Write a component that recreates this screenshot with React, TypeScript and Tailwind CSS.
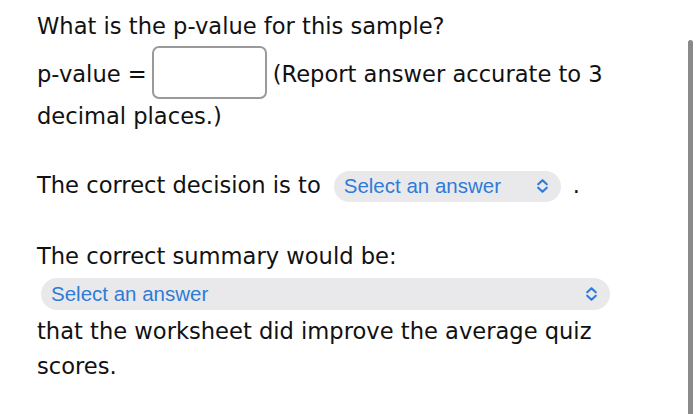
import React from 'react'

const Chevrons = (): React.ReactElement => (
  <svg width="13" height="16" viewBox="0 0 13 16" fill="none" className="shrink-0">
    <path d="M2.2 6.3 L6.5 2.2 L10.8 6.3" stroke="#2f7bd8" strokeWidth="2.1" strokeLinecap="round" strokeLinejoin="round" />
    <path d="M2.2 9.7 L6.5 13.8 L10.8 9.7" stroke="#2f7bd8" strokeWidth="2.1" strokeLinecap="round" strokeLinejoin="round" />
  </svg>
)

const SelectPill = ({ className }: { className: string }): React.ReactElement => (
  <div
    className={`flex items-center justify-between rounded-full bg-[#e9e9eb] pl-[10px] pr-[12px] font-['Liberation_Sans',Arial,sans-serif] text-[20.5px] text-[#2f7bd8] ${className}`}
  >
    <span>Select an answer</span>
    <Chevrons />
  </div>
)

const App = (): React.ReactElement => {
  return (
    <div className="relative h-[414px] w-[700px] overflow-hidden bg-white font-['DejaVu_Sans',Verdana,sans-serif] text-[22.6px] text-[#111]">
      <div className="flex flex-col pl-[37px] pt-[10px]">
        <div className="flex h-[34px] items-center">What is the p-value for this sample?</div>
        <div className="mt-[2px] flex h-[53px] items-center">
          <span className="pt-[4px]">p-value =</span>
          <div className="ml-[5px] h-[53px] w-[115px] rounded-[7px] border-2 border-[#9a9a9a] bg-white" />
          <span className="ml-[6px] pt-[4px]">(Report answer accurate to 3</span>
        </div>
        <div className="flex h-[36px] items-center">decimal places.)</div>
        <div className="mt-[34px] flex h-[34px] items-center">
          <span>The correct decision is to</span>
          <SelectPill className="ml-[13px] h-[31px] w-[227px]" />
          <span className="ml-[12px]">.</span>
        </div>
        <div className="mt-[37px] flex h-[34px] items-center">The correct summary would be:</div>
        <SelectPill className="ml-[4px] mt-[4px] h-[32px] w-[569px]" />
        <div className="mt-[5px] flex h-[34px] items-center">
          that the worksheet did improve the average quiz
        </div>
        <div className="mt-[1px] flex h-[34px] items-center">scores.</div>
      </div>
      <div className="absolute right-[7px] top-[40px] h-[380px] w-[5px] rounded-t-full bg-[#8a8a8a]" />
    </div>
  )
}

export default App
